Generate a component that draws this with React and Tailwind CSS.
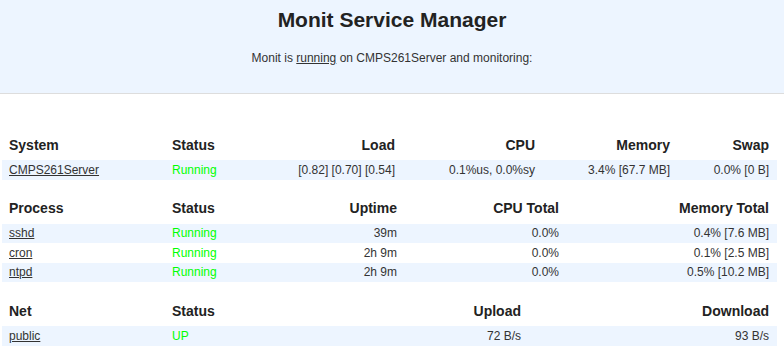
const system = {
  cols: ['w-[163px]', 'w-[85px]', 'w-[153px]', 'w-[140px]', 'w-[135px]', 'w-[99px]'],
  head: ['System', 'Status', 'Load', 'CPU', 'Memory', 'Swap'],
  rows: [['CMPS261Server', 'Running', '[0.82] [0.70] [0.54]', '0.1%us, 0.0%sy', '3.4% [67.7 MB]', '0.0% [0 B]']],
};

const process = {
  cols: ['w-[163px]', 'w-[85px]', 'w-[155px]', 'w-[162px]', 'w-[210px]'],
  head: ['Process', 'Status', 'Uptime', 'CPU Total', 'Memory Total'],
  rows: [
    ['sshd', 'Running', '39m', '0.0%', '0.4% [7.6 MB]'],
    ['cron', 'Running', '2h 9m', '0.0%', '0.1% [2.5 MB]'],
    ['ntpd', 'Running', '2h 9m', '0.0%', '0.5% [10.2 MB]'],
  ],
};

const net = {
  cols: ['w-[163px]', 'w-[85px]', 'w-[279px]', 'w-[248px]'],
  head: ['Net', 'Status', 'Upload', 'Download'],
  rows: [['public', 'UP', '72 B/s', '93 B/s']],
};

const Table = ({ data }) => (
  <div className="w-[775px] ml-[2px]">
    <div className="flex h-[30px] items-center">
      {data.head.map((h, i) => (
        <div
          key={h}
          className={`${data.cols[i]} ${i < 2 ? 'pl-[7px] text-left' : 'pr-[8px] text-right'} text-[14px] font-bold text-[#222]`}
        >
          {h}
        </div>
      ))}
    </div>
    {data.rows.map((row, r) => (
      <div key={r} className={`flex h-[19.5px] items-center ${r % 2 === 0 ? 'bg-[#edf5ff]' : 'bg-white'}`}>
        {row.map((c, i) => (
          <div
            key={i}
            className={`${data.cols[i]} ${i < 2 ? 'pl-[7px] text-left' : 'pr-[8px] text-right'} text-[12px] ${i === 1 ? 'text-[#00ff00]' : 'text-[#333]'}`}
          >
            {i === 0 ? <a className="underline">{c}</a> : c}
          </div>
        ))}
      </div>
    ))}
  </div>
);

export default function App() {
  return (
    <div className="w-[784px] h-[356px] bg-white overflow-hidden" style={{ fontFamily: '"Liberation Sans", Arial, sans-serif' }}>
      <div className="h-[94px] bg-[#edf5ff] border-b border-[#dddddd] flex flex-col items-center">
        <h1 className="mt-[8px] text-[21px] font-bold text-[#222] leading-[24px]">Monit Service Manager</h1>
        <p className="mt-[18px] text-[12px] text-[#333] leading-[16px]">
          Monit is <a className="underline">running</a> on CMPS261Server and monitoring:
        </p>
      </div>
      <div className="pt-[36px] flex flex-col gap-[14px]">
        <Table data={system} />
        <Table data={process} />
        <Table data={net} />
      </div>
    </div>
  );
}
